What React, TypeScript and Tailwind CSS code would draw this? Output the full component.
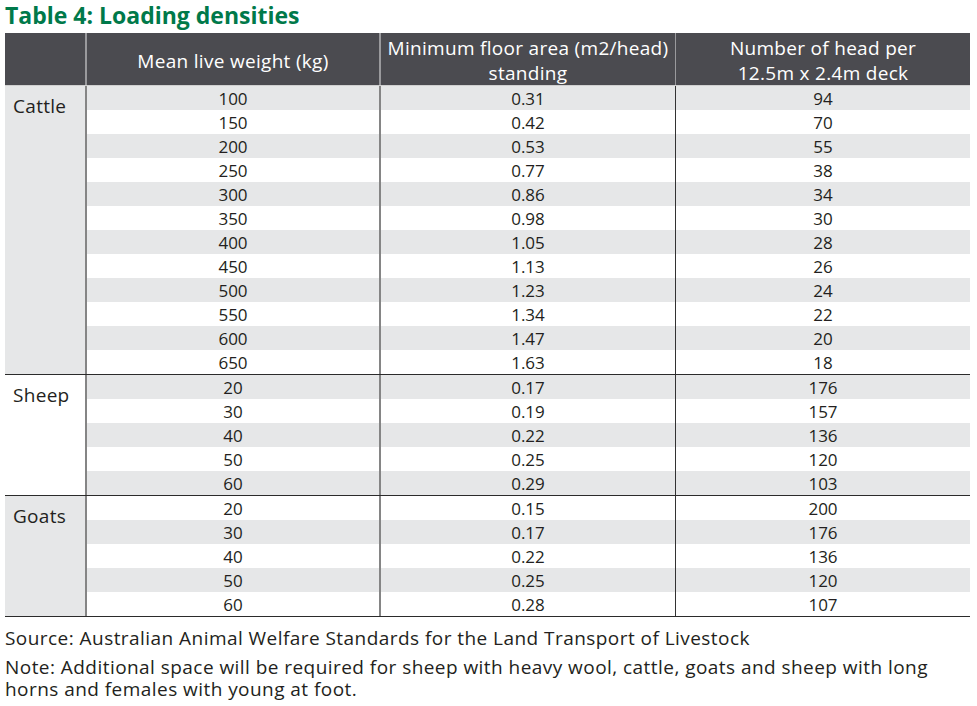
import React from "react";

type Group = { name: string; labelGray: boolean; firstGray: boolean; rows: [string, string, string][] };

const groups: Group[] = [
  {
    name: "Cattle",
    labelGray: true,
    firstGray: true,
    rows: [
      ["100", "0.31", "94"],
      ["150", "0.42", "70"],
      ["200", "0.53", "55"],
      ["250", "0.77", "38"],
      ["300", "0.86", "34"],
      ["350", "0.98", "30"],
      ["400", "1.05", "28"],
      ["450", "1.13", "26"],
      ["500", "1.23", "24"],
      ["550", "1.34", "22"],
      ["600", "1.47", "20"],
      ["650", "1.63", "18"],
    ],
  },
  {
    name: "Sheep",
    labelGray: false,
    firstGray: true,
    rows: [
      ["20", "0.17", "176"],
      ["30", "0.19", "157"],
      ["40", "0.22", "136"],
      ["50", "0.25", "120"],
      ["60", "0.29", "103"],
    ],
  },
  {
    name: "Goats",
    labelGray: true,
    firstGray: false,
    rows: [
      ["20", "0.15", "200"],
      ["30", "0.17", "176"],
      ["40", "0.22", "136"],
      ["50", "0.25", "120"],
      ["60", "0.28", "107"],
    ],
  },
];

export default function App() {
  return (
    <div
      className="w-[977px] h-[706px] bg-white px-[5px] text-[#231f20]"
      style={{ fontFamily: "'Open Sans', 'Noto Sans', sans-serif" }}
    >
      <div className="h-[33px] pt-[2px] text-[23px] font-bold leading-[26px] text-[#00794a]">
        Table 4: Loading densities
      </div>
      <div className="w-[965px]">
        {/* header */}
        <div className="flex h-[52px] bg-[#4b4b50] text-white text-[19px] leading-[25px] tracking-[0.3px]">
          <div className="w-[82px] border-r-2 border-[#9a9a9d]" />
          <div className="w-[294px] border-r-2 border-[#9a9a9d] flex items-center justify-center text-center pt-[4px]">
            Mean live weight (kg)
          </div>
          <div className="w-[295px] border-r border-[#9a9a9d] flex items-center justify-center text-center pt-[3px]">
            Minimum floor area (m2/head)
            <br />
            standing
          </div>
          <div className="flex-1 flex items-center justify-center text-center pt-[3px]">
            Number of head per
            <br />
            12.5m x 2.4m deck
          </div>
        </div>
        <div className="h-[1px] bg-[#d0d0d0]" />
        {groups.map((g) => (
          <div key={g.name} className="flex border-b border-[#2b2b2b]">
            <div
              className={`w-[82px] border-r-2 border-[#858585] pl-[8px] pt-[8px] text-[19px] leading-[24px] tracking-[0.3px] ${
                g.labelGray ? "bg-[#e6e7e8]" : "bg-white"
              }`}
            >
              {g.name}
            </div>
            <div className="flex-1 flex flex-col">
              {g.rows.map((r, i) => {
                const gray = g.firstGray ? i % 2 === 0 : i % 2 === 1;
                return (
                  <div
                    key={i}
                    className={`flex h-[24px] text-[17px] leading-[24px] ${gray ? "bg-[#e6e7e8]" : "bg-white"}`}
                  >
                    <div className="w-[294px] border-r-2 border-[#858585] text-center pt-[1px]">{r[0]}</div>
                    <div className="w-[295px] border-r border-[#333333] text-center pt-[1px]">{r[1]}</div>
                    <div className="flex-1 text-center pt-[1px]">{r[2]}</div>
                  </div>
                );
              })}
            </div>
          </div>
        ))}
      </div>
      <div className="mt-[9px] text-[19px] leading-[24px] tracking-[0.45px]">
        Source: Australian Animal Welfare Standards for the Land Transport of Livestock
      </div>
      <div className="mt-[6px] text-[19px] leading-[22px] tracking-[0.45px]">
        Note: Additional space will be required for sheep with heavy wool, cattle, goats and sheep with long
        <br />
        horns and females with young at foot.
      </div>
    </div>
  );
}
